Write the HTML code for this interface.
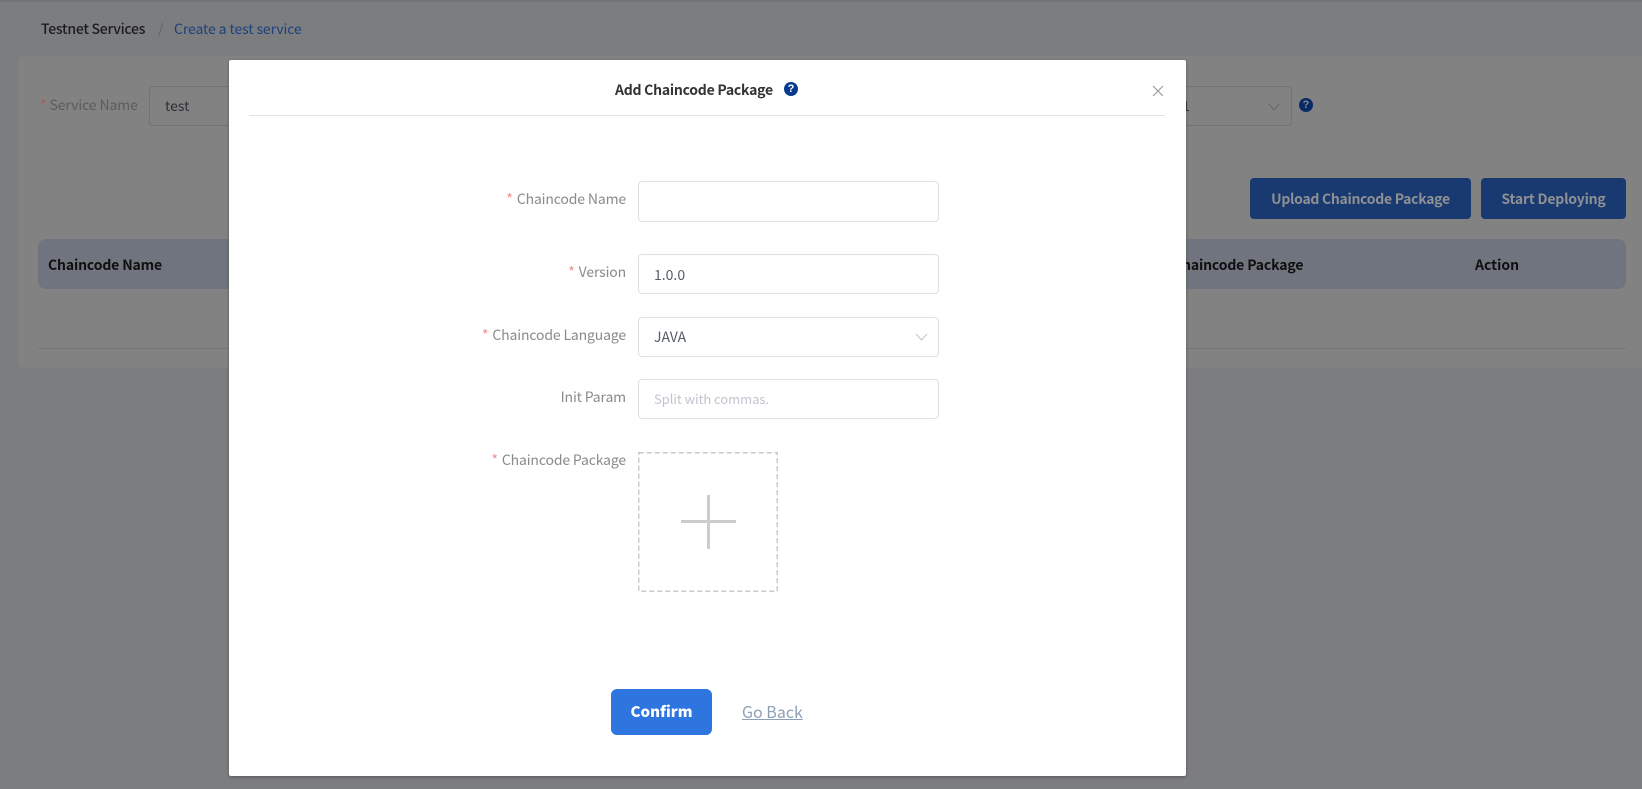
<!DOCTYPE html>
<html>
<head>
<meta charset="utf-8">
<style>
html,body{margin:0;padding:0;width:1642px;height:789px;overflow:hidden;background:#7c7d7e;font-family:"Liberation Sans","Noto Sans CJK SC",sans-serif;}
.a{position:absolute;white-space:nowrap;}
.t{font-family:"Noto Sans CJK SC","Liberation Sans",sans-serif;font-size:14px;line-height:20px;}
.lab{color:#8a8a8a;text-align:right;right:1016px;letter-spacing:-.15px;}
.lab i{color:#f58a8a;font-style:normal;margin-right:4px;}
.inp{left:638px;width:299px;height:38px;border:1px solid #dfe0e6;border-radius:4px;background:#fff;}
.val{left:654px;color:#555b66;}
.help{width:14px;height:14px;border-radius:50%;color:#fff;text-align:center;font:bold 11px/14px "Liberation Sans",sans-serif;}
</style>
</head>
<body>
<div class="a" style="left:0;top:0;width:1642px;height:2px;background:#727376"></div>
<div class="a t" style="left:41px;top:19px;color:#1c1c1e;font-weight:500;letter-spacing:-.25px;">Testnet Services</div>
<div class="a t" style="left:158px;top:19px;color:#5d6066;">/</div>
<div class="a t" style="left:174px;top:19px;color:#1c4080;letter-spacing:-.1px;">Create a test service</div>

<div class="a" style="left:18px;top:56px;width:1624px;height:312px;background:#828282;border-radius:6px 0 0 6px;"></div>
<div class="a t" style="left:40px;top:95px;color:#5c5c5c;letter-spacing:-.1px;"><span style="color:#a85a5a">*</span> Service Name</div>
<div class="a" style="left:149px;top:86px;width:1141px;height:38px;border:1px solid #737373;border-radius:4px;"></div>
<div class="a t" style="left:165px;top:96px;color:#2e3036;">test</div>
<div class="a t" style="left:1182px;top:96px;color:#2e3036;">1</div>
<svg class="a" style="left:1268px;top:102px;" width="12" height="10"><path d="M1 2L6 8L11 2" fill="none" stroke="#666" stroke-width="1"/></svg>
<div class="a help" style="left:1299px;top:98px;background:#0a2a66;color:#888;">?</div>
<div class="a" style="left:1250px;top:178px;width:221px;height:41px;background:#183a70;border-radius:4px;"></div>
<div class="a t" style="left:1250px;top:189px;width:221px;text-align:center;color:#8e9094;font-weight:700;letter-spacing:-.3px;">Upload Chaincode Package</div>
<div class="a" style="left:1481px;top:178px;width:145px;height:41px;background:#183a70;border-radius:4px;"></div>
<div class="a t" style="left:1481px;top:189px;width:145px;text-align:center;color:#8e9094;font-weight:700;letter-spacing:-.2px;">Start Deploying</div>
<div class="a" style="left:38px;top:239px;width:1588px;height:50px;background:#70747e;border-radius:8px;"></div>
<div class="a t" style="left:48px;top:255px;color:#0f0f0f;font-weight:700;letter-spacing:-.15px;">Chaincode Name</div>
<div class="a t" style="left:1173px;top:255px;color:#0f0f0f;font-weight:700;letter-spacing:-.15px;">Chaincode Package</div>
<div class="a t" style="left:1475px;top:255px;color:#0f0f0f;font-weight:700;">Action</div>
<div class="a" style="left:38px;top:348px;width:1588px;height:1px;background:#767676;"></div>

<div class="a" style="left:229px;top:60px;width:957px;height:716px;background:#fff;border-radius:2px;box-shadow:0 1px 3px rgba(0,0,0,.3);"></div>
<div class="a t" style="left:615px;top:80px;color:#333;font-weight:700;letter-spacing:-.25px;">Add Chaincode Package</div>
<div class="a help" style="left:784px;top:82px;background:#0a3a8f;">?</div>
<svg class="a" style="left:1152px;top:85px;" width="12" height="12"><path d="M1 1L11 11M11 1L1 11" fill="none" stroke="#8f939a" stroke-width="1"/></svg>
<div class="a" style="left:249px;top:115px;width:916px;height:1px;background:#e2e2e4;"></div>

<div class="a t lab" style="top:189px;"><i>*</i>Chaincode Name</div>
<div class="a inp" style="top:181px;height:39px;"></div>
<div class="a t lab" style="top:262px;"><i>*</i>Version</div>
<div class="a inp" style="top:254px;"></div>
<div class="a t val" style="top:265px;">1.0.0</div>
<div class="a t lab" style="top:325px;"><i>*</i>Chaincode Language</div>
<div class="a inp" style="top:317px;"></div>
<div class="a t val" style="top:327px;">JAVA</div>
<svg class="a" style="left:915px;top:332px;" width="13" height="10"><path d="M1 2L6.500 8L12 2" fill="none" stroke="#c0c4cc" stroke-width="1"/></svg>
<div class="a t lab" style="top:387px;">Init Param</div>
<div class="a inp" style="top:379px;"></div>
<div class="a t val" style="top:389px;color:#c0c4cc;font-size:13px;letter-spacing:-.05px;">Split with commas.</div>
<div class="a t lab" style="top:450px;"><i>*</i>Chaincode Package</div>
<svg class="a" style="left:638px;top:452px;" width="140" height="140"><rect x=".75" y=".75" width="138.500" height="138.500" fill="none" stroke="#c8c8c8" stroke-width="1.500" stroke-dasharray="5 3"/></svg>
<div class="a" style="left:681px;top:520px;width:55px;height:3px;background:#ccc;"></div>
<div class="a" style="left:707px;top:495px;width:3px;height:54px;background:#ccc;"></div>
<div class="a t" style="left:611px;top:689px;width:101px;height:46px;line-height:46px;background:#2e75e0;border-radius:6px;color:#fff;text-align:center;font-weight:900;font-size:15px;">Confirm</div>
<div class="a t" style="left:742px;top:700px;color:#8ea0b5;font-size:16px;line-height:22px;text-decoration:underline;">Go Back</div>
</body>
</html>
